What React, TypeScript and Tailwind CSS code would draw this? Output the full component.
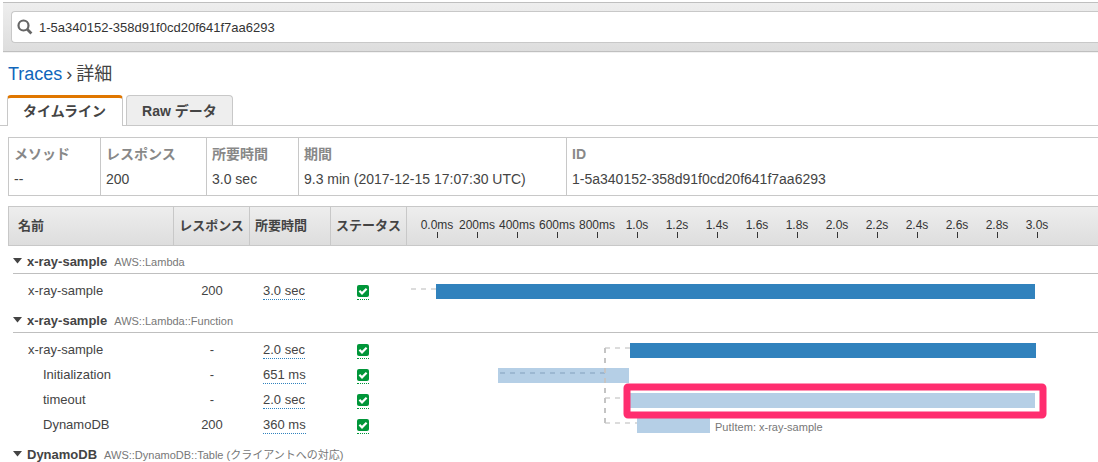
import { ReactNode } from 'react'

const summary = [
  { label: "メソッド", value: "--", className: "w-[92px]" },
  { label: "レスポンス", value: "200", className: "w-[106px]" },
  { label: "所要時間", value: "3.0 sec", className: "w-[92px]" },
  { label: "期間", value: "9.3 min (2017-12-15 17:07:30 UTC)", className: "w-[268px]" },
  { label: "ID", value: "1-5a340152-358d91f0cd20f641f7aa6293", className: "" },
]

const ticks = ["0.0ms", "200ms", "400ms", "600ms", "800ms", "1.0s", "1.2s", "1.4s", "1.6s", "1.8s", "2.0s", "2.2s", "2.4s", "2.6s", "2.8s", "3.0s"]

type Row = { name: string; response: string; duration: string; nested?: boolean }
type Group = { name: string; type: string; rows: Row[]; chart?: ReactNode }

function LambdaChart() {
  return (
    <svg width="640" height="25" className="block overflow-visible" aria-hidden="true">
      <path d="M4 11H29" stroke="#dcdcdc" strokeWidth="2" strokeDasharray="5 5" />
      <rect x="29" y="6" width="599" height="15" fill="#3182bd" />
    </svg>
  )
}

function FunctionChart() {
  return (
    <svg width="660" height="100" className="block overflow-visible" aria-hidden="true">
      <rect x="223" y="6" width="406" height="15" fill="#3182bd" />
      <rect x="91" y="31" width="131" height="15" fill="#b5cfe6" />
      <rect x="223" y="56" width="405" height="15" fill="#b5cfe6" />
      <rect x="230" y="81" width="73" height="15" fill="#b5cfe6" />
      <g fill="none" strokeWidth="2" strokeDasharray="5 5">
        <path d="M198 11H223M198 61H223M198 86H230" stroke="#dcdcdc" />
        <path d="M93 36H198" stroke="#9cb8d2" />
        <path d="M198 11V87" stroke="#c4c4c4" />
      </g>
      <text x="308" y="94" fontSize="11" fill="#777">PutItem: x-ray-sample</text>
      <rect x="220" y="50" width="416" height="28" rx="1" fill="none" stroke="#ff2d6f" strokeWidth="7" />
    </svg>
  )
}

const groups: Group[] = [
  {
    name: "x-ray-sample",
    type: "AWS::Lambda",
    chart: <LambdaChart />,
    rows: [{ name: "x-ray-sample", response: "200", duration: "3.0 sec" }],
  },
  {
    name: "x-ray-sample",
    type: "AWS::Lambda::Function",
    chart: <FunctionChart />,
    rows: [
      { name: "x-ray-sample", response: "-", duration: "2.0 sec" },
      { name: "Initialization", response: "-", duration: "651 ms", nested: true },
      { name: "timeout", response: "-", duration: "2.0 sec", nested: true },
      { name: "DynamoDB", response: "200", duration: "360 ms", nested: true },
    ],
  },
  { name: "DynamoDB", type: "AWS::DynamoDB::Table (クライアントへの対応)", rows: [] },
]

function SearchIcon() {
  return (
    <svg width="16" height="16" viewBox="0 0 16 16" fill="none" stroke="#666" aria-hidden="true">
      <circle cx="6.5" cy="6.5" r="5" strokeWidth="2.2" />
      <path d="M10 10l4.4 4.4" strokeWidth="2.8" />
    </svg>
  )
}

function StatusOk() {
  return (
    <span className="block w-3 border-b border-dotted border-[#009639] pb-0.5" role="img" aria-label="OK">
      <svg width="12" height="12" viewBox="0 0 12 12" className="block">
        <rect width="12" height="12" rx="2" fill="#009639" />
        <path d="M2.4 5.8l2.6 2.6 4.6-4.6" fill="none" stroke="#fff" strokeWidth="2.2" />
      </svg>
    </span>
  )
}

export default function App() {
  return (
    <div className="overflow-hidden bg-white pt-0.5 font-['Liberation_Sans','Noto_Sans_CJK_JP',sans-serif] text-[13px] text-[#444]">
      <header className="ml-[3px] border-y border-[#bfbfbf] bg-linear-to-b from-[#eee] to-[#ddd] py-2 pl-2 shadow-2xs">
        <label className="flex h-8 items-center gap-1.5 rounded-l border border-r-0 border-[#c8c8c8] bg-white pl-[5px]">
          <SearchIcon />
          <input
            type="text"
            aria-label="Trace ID"
            defaultValue="1-5a340152-358d91f0cd20f641f7aa6293"
            className="h-full min-w-0 flex-1 bg-transparent text-[13px] text-[#333] outline-none"
          />
        </label>
      </header>

      <h1 className="mt-2 flex h-7 items-center gap-1 pl-2 text-lg leading-7">
        <a href="#traces" className="text-[#1166bb]">Traces</a>
        <span>›</span>
        <span>詳細</span>
      </h1>

      <div className="mt-[7px] flex h-[31px] gap-[3px] border-b border-[#c8c8c8] pl-[7px] text-sm font-bold" role="tablist">
        <button role="tab" aria-selected="true" className="-mb-px h-[31px] rounded-t border border-t-3 border-b-0 border-[#c8c8c8] border-t-[#e07700] bg-white pr-4 pb-[3px] pl-[15px]">
          タイムライン
        </button>
        <button role="tab" aria-selected="false" className="h-[30px] rounded-t border border-b-0 border-[#c8c8c8] bg-[#eee] px-[15px]">
          Raw データ
        </button>
      </div>

      <main className="pl-2">
        <table className="mt-[11px] w-full table-fixed border-separate border-spacing-0 border border-r-0 border-[#c8c8c8] text-left text-sm">
          <thead>
            <tr>
              {summary.map((item) => (
                <th key={item.label} className={`${item.className} h-[29px] border-r border-[#c8c8c8] px-[5px] pt-[3px] leading-6 text-[#888] last:border-r-0`}>
                  {item.label}
                </th>
              ))}
            </tr>
          </thead>
          <tbody>
            <tr>
              {summary.map((item) => (
                <td key={item.label} className="h-7 border-r border-[#c8c8c8] px-[5px] pb-1 leading-5 whitespace-nowrap last:border-r-0">
                  {item.value}
                </td>
              ))}
            </tr>
          </tbody>
        </table>

        <table className="mt-2.5 w-full table-fixed border-separate border-spacing-0">
          <colgroup>
            <col className="w-[166px]" />
            <col className="w-[76px]" />
            <col className="w-[81px]" />
            <col className="w-[76px]" />
            <col />
          </colgroup>
          <thead>
            <tr className="h-10 bg-linear-to-b from-[#eee] to-[#ddd] text-left *:border-y *:border-[#c8c8c8] *:p-0">
              <th className="border-x pl-[9px]!">名前</th>
              <th className="border-r text-center">レスポンス</th>
              <th className="border-r pl-[5px]!">所要時間</th>
              <th className="border-r text-center">ステータス</th>
              <th className="font-normal">
                <div className="ml-2.5 flex pt-1 text-xs text-[#333]">
                  {ticks.map((tick) => (
                    <span key={tick} className="flex w-10 shrink-0 flex-col items-center leading-[14px]">
                      {tick}
                      <span className="h-1.5 w-px bg-[#333]" />
                    </span>
                  ))}
                </div>
              </th>
            </tr>
          </thead>
          {groups.map((group, i) => (
            <tbody key={group.type}>
              <tr>
                <th colSpan={5} className={`pb-1 pl-[5px] text-left ${i > 0 ? "pt-0.5" : "pt-0"}`}>
                  <div className="flex h-7 items-center border-b border-[#bfbfbf] pt-1">
                    <button aria-expanded="true" className="flex items-center gap-[5px]">
                      <svg width="9" height="8" aria-hidden="true">
                        <path d="M0 0H9L4.5 5.5Z" fill="#444" />
                      </svg>
                      {group.name}
                    </button>
                    <span className="ml-[7px] text-[11px] leading-4 font-normal text-[#777]">{group.type}</span>
                  </div>
                </th>
              </tr>
              {group.rows.map((row, j) => (
                <tr key={row.name} className="h-[25px] *:p-0">
                  <td className={row.nested ? "pl-[35px]!" : "pl-5!"}>{row.name}</td>
                  <td className="text-center">{row.response}</td>
                  <td className="pl-[13px]!">
                    <span className="inline-block border-b border-dotted border-[#3182bd] leading-4">{row.duration}</span>
                  </td>
                  <td className="pt-1! pl-[26px]!">
                    <StatusOk />
                  </td>
                  {j === 0 && (
                    <td rowSpan={group.rows.length} className="align-top">{group.chart}</td>
                  )}
                </tr>
              ))}
            </tbody>
          ))}
        </table>
      </main>
    </div>
  )
}
